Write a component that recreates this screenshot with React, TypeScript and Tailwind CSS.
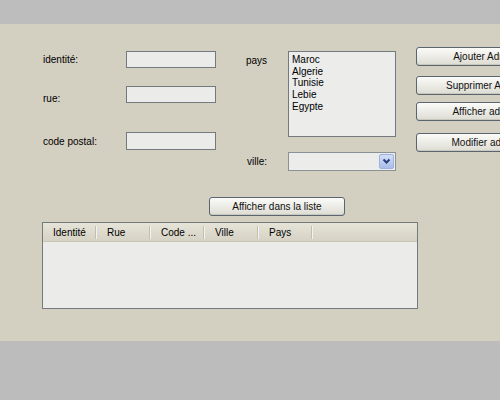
import React from "react";

const font = { fontFamily: '"Liberation Sans", Arial, sans-serif' };

function Btn({ children, className = "" }: { children: React.ReactNode; className?: string }) {
  return (
    <div
      className={
        "flex items-center justify-center rounded-[3px] border border-[#5b6570] bg-gradient-to-b from-[#fbfbf9] to-[#dddcd3] text-[10px] text-[#111] whitespace-nowrap shadow-[inset_0_-1px_0_#c9c8bf] " +
        className
      }
    >
      {children}
    </div>
  );
}

function Field({ className = "" }: { className?: string }) {
  return <div className={"w-[90px] border border-[#737a7d] bg-[#ebebe9] " + className} />;
}

export default function App() {
  const cols = ["Identité", "Rue", "Code ...", "Ville", "Pays"];
  return (
    <div className="w-[500px] h-[400px] overflow-hidden flex flex-col text-black" style={font}>
      <div className="h-[24px] bg-[#bebdbd] shrink-0" />
      <div className="h-[317px] shrink-0 bg-[#d3cfc1] flex flex-col overflow-hidden">
        {/* top section */}
        <div className="flex items-start pt-[23px]">
          {/* left fields */}
          <div className="ml-[43px] mt-[4px] flex flex-col w-[173px]">
            <div className="flex items-center h-[17px]">
              <span className="w-[83px] text-[10px]">identité:</span>
              <Field className="h-[17px]" />
            </div>
            <div className="flex items-center h-[17px] mt-[18px]">
              <span className="w-[83px] text-[10px] mt-[7px]">rue:</span>
              <Field className="h-[17px]" />
            </div>
            <div className="flex items-center h-[18px] mt-[29px]">
              <span className="w-[83px] text-[10px]">code postal:</span>
              <Field className="h-[18px]" />
            </div>
          </div>
          {/* middle */}
          <div className="ml-[30px] mt-[4px] flex flex-col">
            <div className="flex items-start">
              <span className="w-[42px] text-[10px] pt-[2px]">pays</span>
              <div className="w-[108px] h-[86px] border border-[#737a7d] bg-[#ececea] pl-[3px] pt-[2px] text-[10px] leading-[11.7px]">
                <div>Maroc</div>
                <div>Algerie</div>
                <div>Tunisie</div>
                <div>Lebie</div>
                <div>Egypte</div>
              </div>
            </div>
            <div className="flex items-center mt-[15px]">
              <span className="w-[42px] text-[10px] pl-[1px]">ville:</span>
              <div className="w-[108px] h-[19px] border border-[#8a9296] bg-[#ececea] flex justify-end p-[1px]">
                <div className="w-[15px] h-full rounded-[2px] bg-gradient-to-b from-[#d3def8] to-[#a9bdeb] border border-[#9fb2de] flex items-center justify-center">
                  <svg width="9" height="7" viewBox="0 0 9 7">
                    <polyline points="1.5,1.5 4.5,4.5 7.5,1.5" fill="none" stroke="#2a3d78" strokeWidth="2" />
                  </svg>
                </div>
              </div>
            </div>
          </div>
          {/* right buttons */}
          <div className="ml-[20px] flex flex-col shrink-0">
            <Btn className="w-[145px] h-[19px]">Ajouter Adresse</Btn>
            <Btn className="w-[145px] h-[19px] mt-[10px]">Supprimer Adresse</Btn>
            <Btn className="w-[145px] h-[19px] mt-[7px]">Afficher adresse</Btn>
            <Btn className="w-[145px] h-[19px] mt-[12px]">Modifier adresse</Btn>
          </div>
        </div>
        {/* center button */}
        <div className="ml-[209px] mt-[26px]">
          <Btn className="w-[136px] h-[19px]">Afficher dans la liste</Btn>
        </div>
        {/* list view */}
        <div className="ml-[42px] mt-[6px] w-[376px] h-[87px] border border-[#737a7d] bg-[#ebebe9] flex flex-col">
          <div className="h-[19px] flex items-center bg-gradient-to-b from-[#e6e3d8] to-[#d6d2c4] border-b border-[#c8c4b6]">
            {cols.map((c) => (
              <div key={c} className="w-[54px] h-full flex items-center justify-between text-[10px] pl-[10px]">
                <span>{c}</span>
                <span className="w-[2px] h-[13px] border-l border-[#c2beb1] border-r border-r-[#f4f2ea]" />
              </div>
            ))}
          </div>
        </div>
      </div>
      <div className="flex-1 bg-[#bdbcbc]" />
    </div>
  );
}
